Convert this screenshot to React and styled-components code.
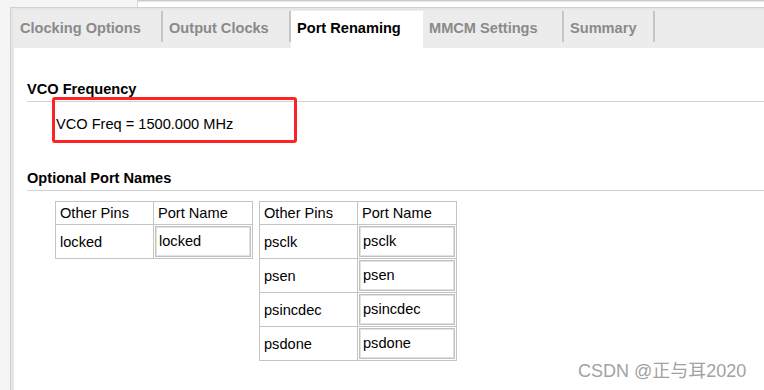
import React from "react";
import styled, { createGlobalStyle } from "styled-components";

// styled [start]
const GlobalStyle = createGlobalStyle`
	html, body {
		margin: 0;
		padding: 0;
		background: #f5f5f5;
	}
	body {
		font-family: "Liberation Sans", Arial, sans-serif;
	}
`;

const Page = styled("div")`
	position: relative;
	display: flex;
	flex-direction: column;
	width: 764px;
	height: 390px;
	overflow: hidden;
	background: #f5f5f5;
	font-size: 14.6px;
`;

const TopStrip = styled("div")`
	display: flex;
	height: 7px;
`;

const TopGap = styled("div")`
	width: 137px;
`;

const TopBox = styled("div")`
	flex: 1;
	background: #fff;
	border-top: 1px solid #cdcdcd;
	border-left: 1px solid #d6d6d6;
	box-shadow: inset 0 1px 0 #e4e4e4;
`;

const Panel = styled("div")`
	flex: 1;
	display: flex;
	flex-direction: column;
	margin-left: 10px;
	padding: 2px 0 0 3px;
	border-top: 1px solid #d0d0d0;
	border-left: 1px solid #d0d0d0;
	background: #e6e6e6;
`;

const TabBar = styled("div")`
	display: flex;
	align-items: flex-start;
	height: 38px;
	padding-top: 1px;
	box-sizing: border-box;
	background: #ececec;
`;

const Tab = styled("div")`
	width: ${(p) => p.$w}px;
	height: 37px;
	box-sizing: border-box;
	padding: 8px 0 0 6px;
	line-height: 18px;
	font-weight: 700;
	white-space: nowrap;
	color: ${(p) => (p.$active ? "#000" : "#8a8a8a")};
	background: ${(p) => (p.$active ? "#fff" : "transparent")};
`;

const TabSep = styled("div")`
	width: 2px;
	height: 31px;
	background: #c6c6c6;
`;

const Content = styled("div")`
	flex: 1;
	background: #fff;
	padding-top: 33px;
`;

const Section = styled("div")`
	margin-left: 13px;
	margin-top: ${(p) => p.$top || 0}px;
`;

const Heading = styled("div")`
	height: 17px;
	line-height: 17px;
	padding-bottom: 3px;
	border-bottom: 1px solid #d2d2d2;
	font-weight: 700;
	color: #000;
`;

const VcoRow = styled("div")`
	position: relative;
	margin-top: 14px;
	padding-left: 29px;
	line-height: 17px;
	color: #000;
`;

const RedBox = styled("div")`
	position: absolute;
	left: 25px;
	top: -19px;
	width: 245px;
	height: 46px;
	box-sizing: border-box;
	border: 3px solid #fb2323;
	border-radius: 3px;
`;

const Tables = styled("div")`
	display: flex;
	align-items: flex-start;
	gap: 6px;
	margin: 10px 0 0 28px;
`;

const Grid = styled("div")`
	display: grid;
	grid-template-columns: 97px 98px;
	grid-template-rows: 22px;
	grid-auto-rows: 33px;
	gap: 1px;
	padding: 1px;
	background: #c4c4c4;
`;

const HeadCell = styled("div")`
	box-sizing: border-box;
	padding: 1px 0 0 4px;
	line-height: 21px;
	background: #fff;
	color: #000;
`;

const Cell = styled("div")`
	display: flex;
	align-items: center;
	padding-left: 4px;
	background: #fff;
	color: #000;
`;

const InputCell = styled("div")`
	padding: 1px;
	background: #fff;
`;

const PortInput = styled("input")`
	display: block;
	width: 96px;
	height: 31px;
	box-sizing: border-box;
	margin: 0;
	padding: 0 0 1px 3px;
	border: 1px solid #c0c0c0;
	box-shadow: inset 0 0 0 1px #e2e2e2;
	outline: none;
	background: #fff;
	font-family: "Liberation Sans", Arial, sans-serif;
	font-size: 14.6px;
	color: #000;
`;

const Watermark = styled("div")`
	position: absolute;
	left: 578px;
	top: 361px;
	line-height: 20px;
	font-size: 18px;
	font-family: "Liberation Sans", "Noto Sans CJK SC", sans-serif;
	color: #a2a2a2;
	white-space: nowrap;
`;
// styled [end]

const TabList = [
	{ label: "Clocking Options", w: 147, sep: true },
	{ label: "Output Clocks", w: 126, sep: true },
	{ label: "Port Renaming", w: 132, active: true },
	{ label: "MMCM Settings", w: 139, sep: true },
	{ label: "Summary", w: 89, sep: true },
];

const PinTables = [
	["locked"],
	["psclk", "psen", "psincdec", "psdone"],
];

function PinTable({ pins }) {
	return (
		<Grid>
			<HeadCell>Other Pins</HeadCell>
			<HeadCell>Port Name</HeadCell>
			{pins.map((pin) => (
				<React.Fragment key={pin}>
					<Cell>{pin}</Cell>
					<InputCell>
						<PortInput defaultValue={pin} readOnly />
					</InputCell>
				</React.Fragment>
			))}
		</Grid>
	);
}

function App() {
	return (
		<Page>
			<GlobalStyle />
			<TopStrip>
				<TopGap />
				<TopBox />
			</TopStrip>
			<Panel>
				<TabBar>
					{TabList.map((tab) => (
						<React.Fragment key={tab.label}>
							<Tab $w={tab.w} $active={tab.active}>
								{tab.label}
							</Tab>
							{tab.sep && <TabSep />}
						</React.Fragment>
					))}
				</TabBar>
				<Content>
					<Section>
						<Heading>VCO Frequency</Heading>
						<VcoRow>
							VCO Freq = 1500.000 MHz
							<RedBox />
						</VcoRow>
					</Section>
					<Section $top={37}>
						<Heading>Optional Port Names</Heading>
						<Tables>
							{PinTables.map((pins, index) => (
								<PinTable key={index} pins={pins} />
							))}
						</Tables>
					</Section>
				</Content>
			</Panel>
			<Watermark>CSDN @正与耳2020</Watermark>
		</Page>
	);
}

export default App;
